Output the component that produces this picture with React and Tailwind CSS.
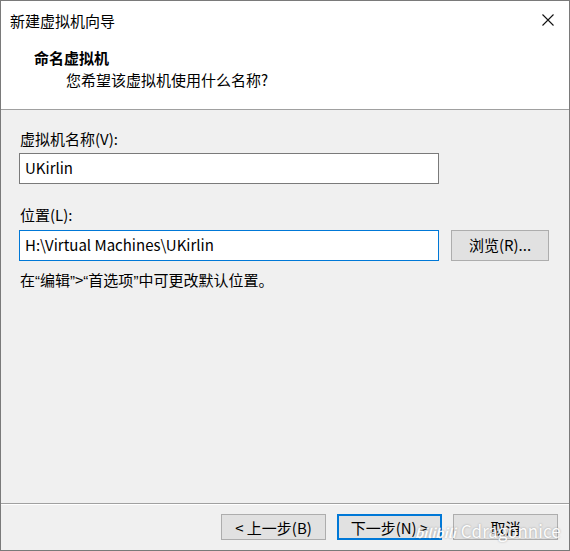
import React from 'react';

const FONT = { fontFamily: '"Noto Sans CJK SC", "Noto Sans", sans-serif' };

function WinButton({ children, primary }) {
  return (
    <button
      className={
        'h-[26px] w-[105px] flex items-center justify-center text-[15px] leading-none text-black bg-[#e1e1e1] ' +
        (primary ? 'border-2 border-[#0078d7]' : 'border border-[#adadad]')
      }
    >
      {children}
    </button>
  );
}

// narrow latin quotes like the original dialog font
function Q({ children }) {
  return <span className="font-['Liberation_Sans',sans-serif]">{children}</span>;
}

export default function App() {
  return (
    <div style={FONT} className="relative w-[570px] h-[551px] bg-[#f0f0f0] border border-[#7a7a7a] flex flex-col overflow-hidden text-black">
      {/* title bar */}
      <div className="h-[39px] bg-white flex items-center justify-between pl-[9px] pr-[15px]">
        <span className="text-[15px] leading-[20px]">新建虚拟机向导</span>
        <svg width="12" height="12" viewBox="0 0 12 12" className="mt-[-2px]">
          <path d="M0.5 0.5 L11.5 11.5 M11.5 0.5 L0.5 11.5" stroke="#111" strokeWidth="1.1" fill="none" />
        </svg>
      </div>

      {/* header */}
      <div className="h-[70px] bg-white border-b border-[#a0a0a0] pt-[8px] pl-[33px]">
        <div className="text-[15px] leading-[20px] font-bold">命名虚拟机</div>
        <div className="text-[15px] leading-[20px] mt-[2px] pl-[32px]">您希望该虚拟机使用什么名称?</div>
      </div>

      {/* content */}
      <div className="flex-1 pl-[18px] pt-[19px] border-b border-[#a0a0a0] shadow-[0_1px_0_#ffffff]">
        <div className="text-[15px] leading-[20px] pl-[1px]">虚拟机名称(V):</div>
        <div className="mt-[4px] w-[420px] h-[31px] bg-white border border-[#7a7a7a] flex items-center pl-[5px] text-[15px]">
          UKirlin
        </div>
        <div className="mt-[21px] text-[15px] leading-[20px] pl-[1px]">位置(L):</div>
        <div className="mt-[5px] flex items-center gap-[12px]">
          <div className="w-[420px] h-[31px] bg-white border border-[#0078d7] flex items-center pl-[5px] text-[15px]">
            H:\Virtual Machines\UKirlin
          </div>
          <button className="w-[98px] h-[31px] bg-[#e1e1e1] border border-[#adadad] text-[15px] flex items-center justify-center">
            浏览(R)...
          </button>
        </div>
        <div className="mt-[9px] text-[15px] leading-[20px] pl-[1px]">
          在<Q>“</Q>编辑<Q>”</Q>&gt;<Q>“</Q>首选项<Q>”</Q>中可更改默认位置。
        </div>
      </div>

      {/* footer */}
      <div className="h-[46px] flex items-start justify-end gap-[11px] pt-[10px] pr-[11px]">
        <WinButton>&lt; 上一步(B)</WinButton>
        <WinButton primary>下一步(N) &gt;</WinButton>
        <WinButton>取消</WinButton>
      </div>

      {/* watermark */}
      <div className="absolute left-[414px] top-[521px] flex items-end gap-[5px] text-white opacity-90 [text-shadow:0_0_2px_rgba(0,0,0,0.35)] whitespace-nowrap">
        <span className="text-[13px] font-bold leading-none italic">bilibili</span>
        <span className="text-[17px] leading-none">Cdragonnice</span>
      </div>
    </div>
  );
}
